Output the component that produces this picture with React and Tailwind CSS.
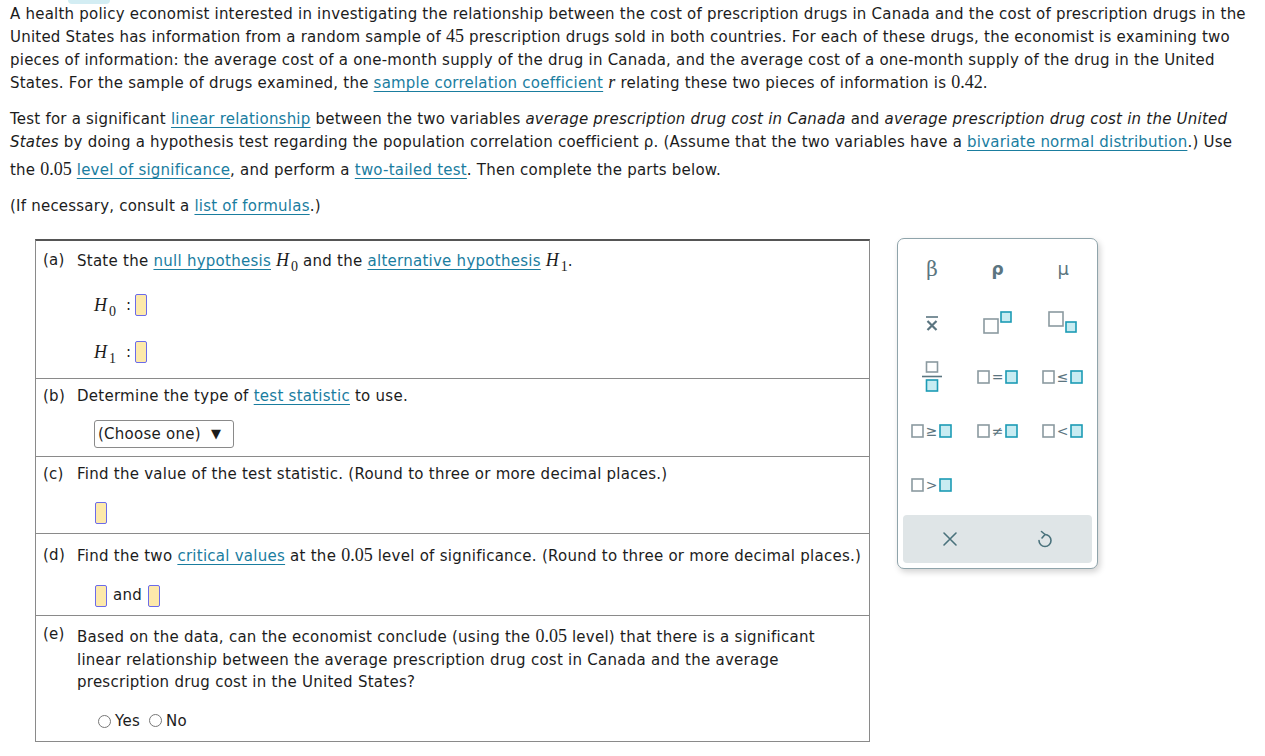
import React from "react";

const Link = ({ children }) => (
  <span className="text-[#1a7d9f] underline decoration-[#1a7d9f] underline-offset-[3px]">{children}</span>
);
const M = ({ children }) => (
  <span className="font-['Liberation_Serif',serif] text-[18px] tracking-normal">{children}</span>
);
const MI = ({ children }) => (
  <span className="font-['Liberation_Serif',serif] italic text-[18px]">{children}</span>
);
const Hs = ({ sub }) => (
  <span className="font-['Liberation_Serif',serif] text-[18px] whitespace-nowrap tracking-normal">
    <i>H</i>
    <span className="text-[14px] relative top-[5px] ml-[2px]">{sub}</span>
  </span>
);
const Box = () => (
  <span className="inline-block w-[12px] h-[22px] bg-[#fde9ab] border-[1.5px] border-[#6b6bea] rounded-[2px] align-middle" />
);

const G = "#8b9aa0";
const CF = "#c8ecf2";
const CS = "#1c9bb5";
const T = "#5b7580";

const Rel = ({ op }) => (
  <svg width="42" height="14" viewBox="0 0 42 14">
    <rect x="1" y="1" width="11" height="12" fill="none" stroke={G} strokeWidth="1.6" />
    <text x="20.5" y="11.5" textAnchor="middle" fontSize="14" fill={T} fontFamily="DejaVu Sans, sans-serif">{op}</text>
    <rect x="29" y="1" width="11" height="12" fill={CF} stroke={CS} strokeWidth="1.6" />
  </svg>
);

const Cell = ({ children }) => (
  <div className="w-[66px] h-[54px] flex items-center justify-center">{children}</div>
);

function Palette() {
  return (
    <div className="w-[201px] h-[331px] mt-[-1px] rounded-[7px] border border-[#8fa4ab] shadow-[2px_3px_6px_rgba(0,0,0,0.18)] bg-white flex flex-col tracking-normal">
      <div className="pt-[3px] pl-[1px] grid grid-cols-3 w-[198px]">
        <Cell><span className="font-['DejaVu_Serif',serif] text-[20px] text-[#5b7580] leading-none">β</span></Cell>
        <Cell><span className="font-['DejaVu_Sans',sans-serif] font-bold text-[17px] text-[#5b7580] leading-none">ρ</span></Cell>
        <Cell><span className="font-['DejaVu_Sans',sans-serif] text-[18px] text-[#5b7580] leading-none">μ</span></Cell>
        <Cell>
          <svg width="16" height="18" viewBox="0 0 16 18">
            <line x1="2" y1="3" x2="14" y2="3" stroke={T} strokeWidth="1.6" />
            <path d="M3.5 7 L12.5 16 M12.5 7 L3.5 16" stroke={T} strokeWidth="2.2" />
          </svg>
        </Cell>
        <Cell>
          <svg width="30" height="24" viewBox="0 0 30 24">
            <rect x="1" y="8" width="14" height="14" fill="none" stroke={G} strokeWidth="1.6" />
            <rect x="18" y="1" width="10" height="10" fill={CF} stroke={CS} strokeWidth="1.6" />
          </svg>
        </Cell>
        <Cell>
          <svg width="30" height="24" viewBox="0 0 30 24">
            <rect x="1" y="1" width="14" height="14" fill="none" stroke={G} strokeWidth="1.6" />
            <rect x="18" y="11" width="10" height="10" fill={CF} stroke={CS} strokeWidth="1.6" />
          </svg>
        </Cell>
        <Cell>
          <svg width="22" height="32" viewBox="0 0 22 32">
            <rect x="5.5" y="1" width="11" height="10" fill="none" stroke={G} strokeWidth="1.6" />
            <line x1="1" y1="15.5" x2="21" y2="15.5" stroke={T} strokeWidth="1.6" />
            <rect x="5.5" y="19" width="11" height="11" fill={CF} stroke={CS} strokeWidth="1.6" />
          </svg>
        </Cell>
        <Cell><Rel op="=" /></Cell>
        <Cell><Rel op="≤" /></Cell>
        <Cell><Rel op="≥" /></Cell>
        <Cell><Rel op="≠" /></Cell>
        <Cell><Rel op="<" /></Cell>
        <Cell><Rel op=">" /></Cell>
      </div>
      <div className="mx-[5px] mt-[3px] h-[48px] rounded-[4px] bg-[#dfe5e7] flex">
        <div className="flex-1 flex items-center justify-center">
          <svg width="16" height="16" viewBox="0 0 16 16">
            <path d="M2 2 L14 14 M14 2 L2 14" stroke="#4a727c" strokeWidth="1.6" strokeLinecap="round" />
          </svg>
        </div>
        <div className="flex-1 flex items-center justify-center">
          <svg width="18" height="20" viewBox="0 0 18 20">
            <path d="M9 5.5 A6 6 0 1 1 3 11.5" fill="none" stroke="#4a727c" strokeWidth="1.6" strokeLinecap="round" />
            <path d="M9 5.5 L5.5 2.5 M9 5.5 L6 9" fill="none" stroke="#4a727c" strokeWidth="1.6" strokeLinecap="round" />
          </svg>
        </div>
      </div>
    </div>
  );
}

const Radio = () => (
  <span className="inline-block w-[13px] h-[13px] rounded-full border border-[#777] bg-white align-[-1px]" />
);

export default function App() {
  return (
    <div className="relative w-[1265px] h-[756px] bg-white text-[#1c1c1c] font-['DejaVu_Sans',sans-serif] text-[15px] overflow-hidden">
      <div className="absolute left-[68px] top-0 w-[42px] h-[4px] rounded-b-[4px] bg-[#d3edf3]" />
      <div className="pl-[10px] pt-[3px] tracking-[0.22px]">
        <div className="leading-[22.3px] whitespace-nowrap">
          <div>A health policy economist interested in investigating the relationship between the cost of prescription drugs in Canada and the cost of prescription drugs in the</div>
          <div>United States has information from a random sample of <M>45</M> prescription drugs sold in both countries. For each of these drugs, the economist is examining two</div>
          <div>pieces of information: the average cost of a one-month supply of the drug in Canada, and the average cost of a one-month supply of the drug in the United</div>
          <div>States. For the sample of drugs examined, the <Link>sample correlation coefficient</Link> <MI>r</MI> relating these two pieces of information is <M>0.42</M>.</div>
        </div>
        <div className="mt-[14px] whitespace-nowrap">
          <div className="h-[23px] flex items-center">
            <span>Test for a significant <Link>linear relationship</Link> between the two variables <i>average prescription drug cost in Canada</i> and <i>average prescription drug cost in the United</i></span>
          </div>
          <div className="h-[23px] flex items-center">
            <span><i>States</i> by doing a hypothesis test regarding the population correlation coefficient ρ. (Assume that the two variables have a <Link>bivariate normal distribution</Link>.) Use</span>
          </div>
          <div className="h-[31px] flex items-center">
            <span>the <M>0.05</M> <Link>level of significance</Link>, and perform a <Link>two-tailed test</Link>. Then complete the parts below.</span>
          </div>
        </div>
        <div className="mt-[10px] h-[22px] flex items-center">
          <span>(If necessary, consult a <Link>list of formulas</Link>.)</span>
        </div>
      </div>

      <div className="flex items-start ml-[35px] mt-[22px] gap-[27px]">
        <div className="w-[835px] border-x border-b border-[#8a8a8a] border-t-[2px] border-t-[#555] tracking-[0.26px]">
          {/* (a) */}
          <div className="h-[138px] border-b border-[#8a8a8a] pl-[7px] pt-[8px]">
            <div className="h-[22px] flex items-center whitespace-nowrap">
              <span className="w-[34px]">(a)</span>
              <span>State the <Link>null hypothesis</Link> <Hs sub="0" /> and the <Link>alternative hypothesis</Link> <Hs sub="1" />.</span>
            </div>
            <div className="mt-[22px] h-[24px] flex items-center pl-[51px]">
              <Hs sub="0" /><span className="ml-[10px] mr-[4px]">:</span><Box />
            </div>
            <div className="mt-[23px] h-[24px] flex items-center pl-[51px]">
              <Hs sub="1" /><span className="ml-[10px] mr-[4px]">:</span><Box />
            </div>
          </div>
          {/* (b) */}
          <div className="h-[78px] border-b border-[#8a8a8a] pl-[7px] pt-[6px]">
            <div className="h-[22px] flex items-center whitespace-nowrap">
              <span className="w-[34px]">(b)</span>
              <span>Determine the type of <Link>test statistic</Link> to use.</span>
            </div>
            <div className="mt-[13px] ml-[51px] w-[140px] h-[28px] border border-[#8a8a8a] rounded-[3px] flex items-center pl-[3px] whitespace-nowrap">
              (Choose one) <span className="ml-[10px] text-[13px]">▼</span>
            </div>
          </div>
          {/* (c) */}
          <div className="h-[77px] border-b border-[#8a8a8a] pl-[7px] pt-[6px]">
            <div className="h-[22px] flex items-center whitespace-nowrap">
              <span className="w-[34px]">(c)</span>
              <span>Find the value of the test statistic. (Round to three or more decimal places.)</span>
            </div>
            <div className="mt-[16px] ml-[52px] h-[23px] flex items-center"><Box /></div>
          </div>
          {/* (d) */}
          <div className="h-[82px] border-b border-[#8a8a8a] pl-[7px] pt-[9px]">
            <div className="h-[24px] flex items-center whitespace-nowrap">
              <span className="w-[34px]">(d)</span>
              <span>Find the two <Link>critical values</Link> at the <M>0.05</M> level of significance. (Round to three or more decimal places.)</span>
            </div>
            <div className="mt-[17px] ml-[52px] h-[23px] flex items-center gap-[6px]"><Box /><span>and</span><Box /></div>
          </div>
          {/* (e) */}
          <div className="h-[125px] pl-[7px] pt-[9px]">
            <div className="flex whitespace-nowrap">
              <span className="w-[34px] leading-[19px]">(e)</span>
              <div className="leading-[22.5px]">
                <div>Based on the data, can the economist conclude (using the <M>0.05</M> level) that there is a significant</div>
                <div>linear relationship between the average prescription drug cost in Canada and the average</div>
                <div>prescription drug cost in the United States?</div>
              </div>
            </div>
            <div className="mt-[17px] ml-[55px] h-[22px] flex items-center whitespace-nowrap">
              <Radio /><span className="ml-[4px]">Yes</span>
              <span className="ml-[9px]"><Radio /></span><span className="ml-[4px]">No</span>
            </div>
          </div>
        </div>
        <Palette />
      </div>
    </div>
  );
}
